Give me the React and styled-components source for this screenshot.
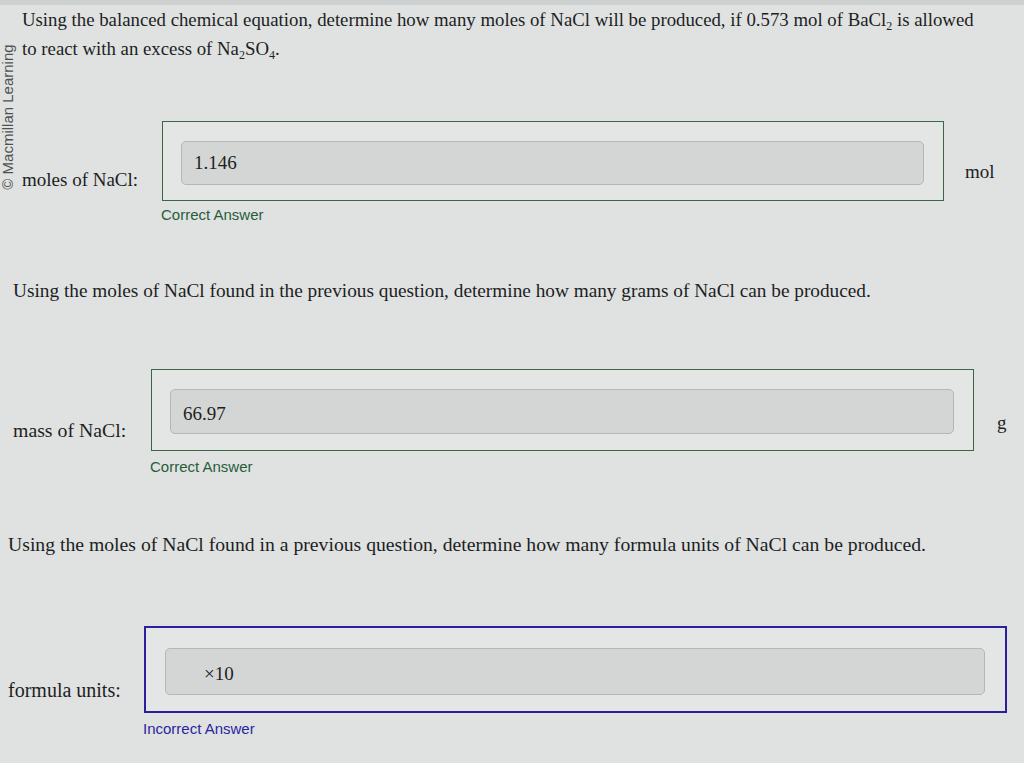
import styled, { createGlobalStyle } from "styled-components";

const GlobalStyle = createGlobalStyle`
  html, body {
    margin: 0;
    padding: 0;
    background: #dfe2e1;
  }
`;

const Page = styled.div`
  position: relative;
  box-sizing: border-box;
  width: 1024px;
  height: 763px;
  overflow: hidden;
  background: #dfe2e1;
  border-top: 5px solid #cdd0d0;
  font-family: "Liberation Serif", "Times New Roman", serif;
  color: #1d1e1f;
`;

// vertical copyright mark along the left edge
const Watermark = styled.div`
  position: absolute;
  left: -69px;
  top: 104px;
  width: 154px;
  text-align: center;
  transform: rotate(-90deg);
  font-family: "Liberation Sans", Arial, sans-serif;
  font-size: 15px;
  line-height: 16px;
  color: #4f5253;
  white-space: nowrap;
`;

const Section = styled.section`
  padding-left: ${(p) => p.$indent}px;
  margin-top: ${(p) => p.$top}px;
  font-size: ${(p) => p.$size}px;
`;

const Question = styled.p`
  margin: 0;
  font-size: inherit;
  line-height: 29px;

  sub {
    font-size: 12px;
    line-height: 0;
    vertical-align: -4px;
  }
`;

const Row = styled.div`
  display: flex;
  align-items: flex-start;
  margin-top: ${(p) => p.$gap}px;
`;

const Label = styled.div`
  flex: none;
  width: ${(p) => p.$width}px;
  margin-top: ${(p) => p.$offset}px;
  font-size: ${(p) => p.$size}px;
  line-height: 24px;
`;

const Field = styled.div`
  display: flex;
  flex-direction: column;
`;

const BoxLine = styled.div`
  display: flex;
  align-items: flex-start;
`;

const AnswerBox = styled.div`
  box-sizing: border-box;
  width: ${(p) => p.$width}px;
  height: ${(p) => p.$height}px;
  padding: ${(p) => p.$inset}px ${(p) => p.$inset}px 0 ${(p) => p.$inset - 1}px;
  border: ${(p) =>
    p.$wrong ? "2px solid #2b1f9c" : "1.5px solid #3a6647"};
  background: #e3e6e5;
`;

const Input = styled.div`
  box-sizing: border-box;
  height: ${(p) => p.$height}px;
  padding-left: ${(p) => p.$pad}px;
  padding-top: ${(p) => p.$padTop}px;
  background: #d3d6d5;
  border: 1.5px solid #b4b7b6;
  border-radius: 5px;
  font-size: 19px;
  line-height: 24px;
`;

const Unit = styled.div`
  margin-left: ${(p) => p.$gap}px;
  margin-top: ${(p) => p.$offset}px;
  font-size: 19px;
  line-height: 24px;
`;

const Feedback = styled.div`
  margin-top: ${(p) => p.$gap}px;
  margin-left: -1px;
  font-family: "Liberation Sans", Arial, sans-serif;
  font-size: 15px;
  line-height: 18px;
  color: ${(p) => (p.$wrong ? "#2a26a0" : "#285c3b")};
`;

const parts = [
  {
    indent: 22,
    top: 0,
    size: 18.8,
    question: (
      <>
        Using the balanced chemical equation, determine how many moles of NaCl
        will be produced, if 0.573 mol of BaCl<sub>2</sub> is allowed
        <br />
        to react with an excess of Na<sub>2</sub>SO<sub>4</sub>.
      </>
    ),
    rowGap: 58,
    label: "moles of NaCl:",
    labelSize: 19,
    labelWidth: 140,
    labelOffset: 47,
    boxWidth: 782,
    boxHeight: 80,
    inset: 19,
    inputHeight: 44,
    value: "1.146",
    valuePad: 12,
    valueTop: 9,
    unit: "mol",
    unitGap: 21,
    unitOffset: 39,
    feedbackGap: 5,
    wrong: false,
  },
  {
    indent: 13,
    top: 52,
    size: 19.3,
    question:
      "Using the moles of NaCl found in the previous question, determine how many grams of NaCl can be produced.",
    rowGap: 64,
    label: "mass of NaCl:",
    labelSize: 19.8,
    labelWidth: 138,
    labelOffset: 49,
    boxWidth: 823,
    boxHeight: 82,
    inset: 19,
    inputHeight: 45,
    value: "66.97",
    valuePad: 12,
    valueTop: 12,
    unit: "g",
    unitGap: 23,
    unitOffset: 42,
    feedbackGap: 7,
    wrong: false,
  },
  {
    indent: 8,
    top: 54,
    size: 19.7,
    question:
      "Using the moles of NaCl found in a previous question, determine how many formula units of NaCl can be produced.",
    rowGap: 67,
    label: "formula units:",
    labelSize: 20,
    labelWidth: 136,
    labelOffset: 52,
    boxWidth: 863,
    boxHeight: 87,
    inset: 20,
    inputHeight: 47,
    value: "×10",
    valuePad: 38,
    valueTop: 13,
    unit: null,
    feedbackGap: 7,
    wrong: true,
  },
];

const App = () => {
  return (
    <>
      <GlobalStyle />
      <Page>
        <Watermark>© Macmillan Learning</Watermark>
        {parts.map((part) => (
          <Section
            key={part.label}
            $indent={part.indent}
            $top={part.top}
            $size={part.size}
          >
            <Question>{part.question}</Question>
            <Row $gap={part.rowGap}>
              <Label
                $width={part.labelWidth}
                $offset={part.labelOffset}
                $size={part.labelSize}
              >
                {part.label}
              </Label>
              <Field>
                <BoxLine>
                  <AnswerBox
                    $width={part.boxWidth}
                    $height={part.boxHeight}
                    $inset={part.inset}
                    $wrong={part.wrong}
                  >
                    <Input
                      $height={part.inputHeight}
                      $pad={part.valuePad}
                      $padTop={part.valueTop}
                    >
                      {part.value}
                    </Input>
                  </AnswerBox>
                  {part.unit && (
                    <Unit $gap={part.unitGap} $offset={part.unitOffset}>
                      {part.unit}
                    </Unit>
                  )}
                </BoxLine>
                <Feedback $gap={part.feedbackGap} $wrong={part.wrong}>
                  {part.wrong ? "Incorrect Answer" : "Correct Answer"}
                </Feedback>
              </Field>
            </Row>
          </Section>
        ))}
      </Page>
    </>
  );
};

export default App;
